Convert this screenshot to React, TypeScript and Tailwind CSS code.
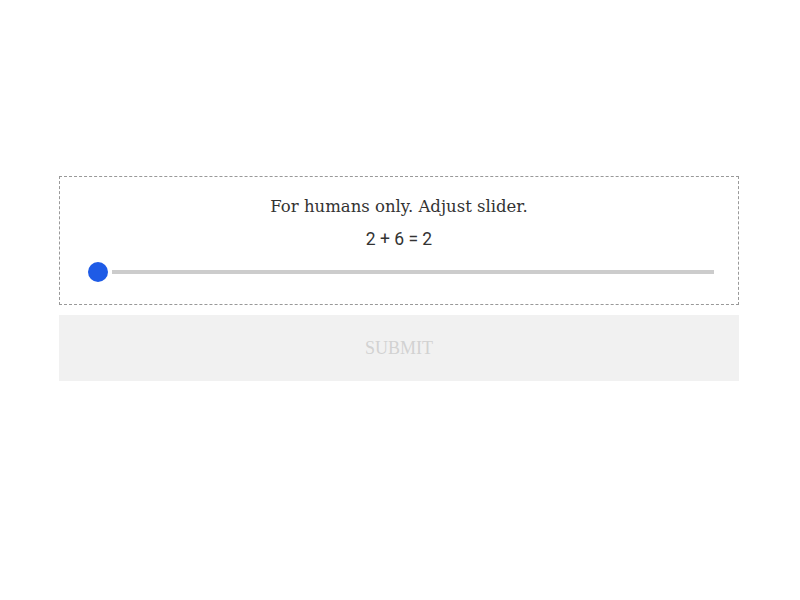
export default function App() {
  return (
    <div className="min-h-[600px] w-[800px] bg-white pt-[176px]">
      <div className="ml-[59px] flex w-[680px] flex-col gap-[10px]">
        <div className="flex h-[129px] flex-col items-center border border-dashed border-[#999] pt-[19px]">
          <p className="font-['DejaVu_Serif',serif] text-[16.5px] leading-[22px] text-[#333]">
            For humans only. Adjust slider.
          </p>
          <p className="mt-[10px] font-['Roboto',sans-serif] text-[17.5px] leading-[22px] text-[#333]">
            2 + 6 = 2
          </p>
          <div className="mt-[12px] flex w-full items-center pl-[28px] pr-[24px]">
            <span className="h-[20px] w-[20px] shrink-0 rounded-full bg-[#1e5be6]" />
            <span className="ml-[4px] h-[4px] flex-1 bg-[#cccccc]" />
          </div>
        </div>
        <button
          type="button"
          disabled
          className="flex h-[66px] w-full items-center justify-center bg-[#f1f1f1] font-['Liberation_Serif',serif] text-[18px] text-[#d2d2d2]"
        >
          SUBMIT
        </button>
      </div>
    </div>
  );
}
